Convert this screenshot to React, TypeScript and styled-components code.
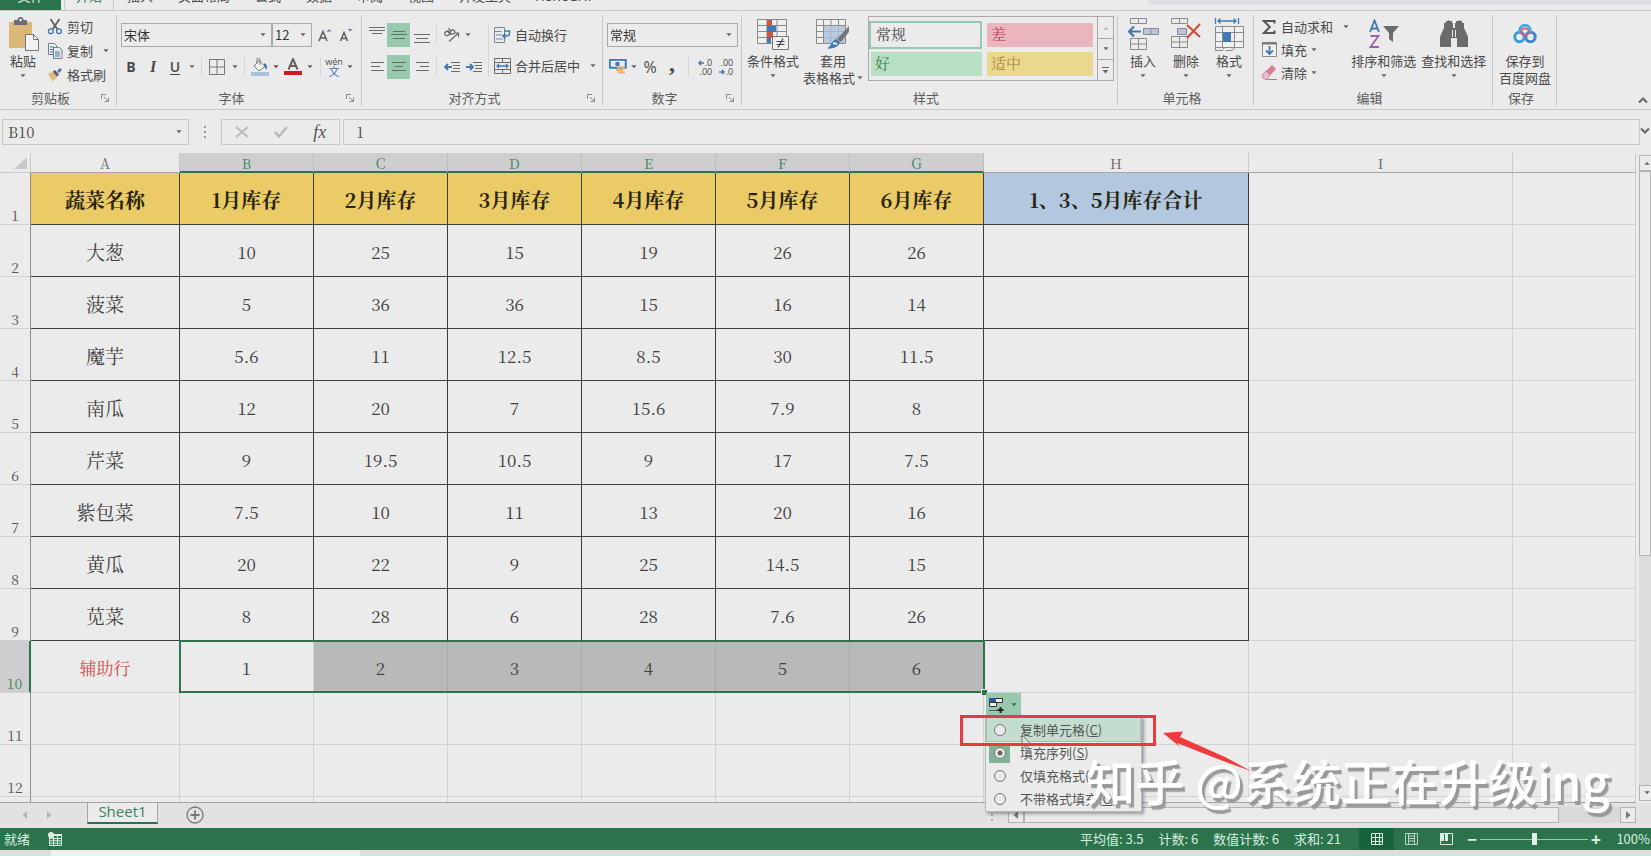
import React from 'react';
import styled, { createGlobalStyle, css } from 'styled-components';

const sans = '"Noto Sans CJK SC", "Open Sans", sans-serif';
const serif = '"Noto Serif CJK SC", "Noto Sans CJK SC", serif';
const c = {
  bg: '#ebebeb', line: '#c9c9c9', box: '#a9a9a9', text: '#4a4a4a', green: '#2b744b',
  mint: '#97c9ae', head: '#cecece', grid: '#d2d2d2', blue: '#3f78b5', ink: '#707070',
};

const Global = createGlobalStyle`
  *, *::before, *::after { box-sizing: border-box; }
  body { margin: 0; background: ${c.bg}; }
  button, input, select { font: inherit; color: inherit; margin: 0; padding: 0; border: 0; border-radius: 0; background: none; }
  svg { display: block; flex: none; }
`;

const App$ = styled.div`
  position: relative;
  display: flex;
  flex-direction: column;
  min-height: 100vh;
  overflow: hidden;
  background: ${c.bg};
  color: ${c.text};
  font: 13px/18px ${sans};
`;

/* ---------- tabs ---------- */
const TabBar = styled.nav`
  display: flex;
  align-items: flex-end;
  height: 11px;
  overflow: hidden;
  border-bottom: 1px solid ${c.line};
`;
const Tab = styled.button<{ $kind?: 'file' | 'active' }>`
  flex: none;
  height: 30px;
  padding: 7px 12px 5px 13px;
  line-height: 18px;
  ${p => p.$kind === 'file' && css`width: 61px; padding: 7px 0 5px; margin-right: 3px; background: ${c.green}; color: #e8f2ec;`}
  ${p => p.$kind === 'active' && css`width: 50px; padding: 7px 0 5px; color: ${c.green}; border: solid ${c.line}; border-width: 0 1px;`}
`;
const TitleHaze = styled.div`
  align-self: flex-start;
  flex: 1;
  max-width: 503px;
  height: 5px;
  margin-left: auto;
  background: #dfe0e6;
`;

/* ---------- ribbon ---------- */
const Ribbon = styled.div`
  display: flex;
  height: 99px;
  padding: 4px 0 3px;
  border-bottom: 1px solid ${c.line};
`;
const GroupBox = styled.section<{ $w: number }>`
  flex: none;
  display: flex;
  flex-direction: column;
  width: ${p => p.$w}px;
  border-right: 1px solid ${c.line};
`;
const GroupBody = styled.div`
  display: flex;
  align-items: flex-start;
  flex: 1 1 0;
  min-height: 0;
  padding: 0 4px;
`;
const GroupFoot = styled.div`
  flex: none;
  display: flex;
  align-items: center;
  height: 16px;
  padding-right: 7px;
  line-height: 16px;
  color: #5d5d5d;
`;
const GroupName = styled.span`
  flex: 1;
  text-align: center;
`;
const Launcher = styled.button`
  height: 8px;
`;
const Stack = styled.div<{ $gap?: number; $pad?: string }>`
  display: flex;
  flex-direction: column;
  gap: ${p => p.$gap ?? 0}px;
  padding: ${p => p.$pad ?? '0'};
`;
const Row = styled.div<{ $gap?: number; $pad?: string }>`
  display: flex;
  align-items: center;
  gap: ${p => p.$gap ?? 0}px;
  height: 24px;
  padding: ${p => p.$pad ?? '0'};
`;
const BigBtn = styled.button<{ $w: number }>`
  flex: none;
  display: flex;
  flex-direction: column;
  align-items: center;
  width: ${p => p.$w}px;
  padding-top: 2px;
  line-height: 17px;
  white-space: nowrap;
`;
const BigIcon = styled.span`
  display: flex;
  align-items: center;
  height: 34px;
  margin-bottom: 1px;
`;
const BigCaret = styled.span`
  display: flex;
  align-items: center;
  height: 14px;
`;
const WithCaret = styled.span`
  display: flex;
  align-items: center;
  gap: 2px;
`;
const SmallBtn = styled.button`
  display: flex;
  align-items: center;
  gap: 4px;
  height: 23px;
  white-space: nowrap;
`;
const IconSlot = styled.span`
  display: flex;
  justify-content: center;
  width: 16px;
`;
const IconBtn = styled.button<{ $w: number; $on?: boolean }>`
  flex: none;
  display: flex;
  align-items: center;
  justify-content: center;
  width: ${p => p.$w}px;
  height: 24px;
  background: ${p => (p.$on ? c.mint : 'none')};
`;
const Letter = styled.span<{ $v: 'b' | 'i' | 'u' | 'pct' | 'comma' }>`
  font: 15px/20px "Open Sans", sans-serif;
  ${p => p.$v === 'b' && css`font-weight: 700; font-size: 14px;`}
  ${p => p.$v === 'i' && css`font: italic 700 16px/20px "Liberation Serif", serif;`}
  ${p => p.$v === 'u' && css`font-weight: 600; font-size: 14px; line-height: 15px; border-bottom: 1px solid ${c.text};`}
  ${p => p.$v === 'pct' && css`font-size: 16px;`}
  ${p => p.$v === 'comma' && css`font: 700 24px/16px "Liberation Serif", serif; height: 24px;`}
`;
const Rule = styled.span<{ $tall?: boolean }>`
  flex: none;
  width: 1px;
  height: ${p => (p.$tall ? 52 : 20)}px;
  background: #d6d6d6;
`;
const SelectWrap = styled.label<{ $w: number }>`
  display: flex;
  align-items: center;
  width: ${p => p.$w}px;
  height: 24px;
  padding-right: 5px;
  border: 1px solid ${c.box};
  color: #333;
`;
const Select = styled.select`
  flex: 1;
  min-width: 0;
  padding-left: 2px;
  appearance: none;
  outline: none;
`;

const Gallery = styled.div`
  display: grid;
  grid-template-columns: 228px 16px;
  height: 65px;
  margin: 1px 0 0 2px;
  border: 1px solid ${c.box};
`;
const Swatches = styled.div`
  display: grid;
  grid-template-columns: 113px 108px;
  grid-template-rows: 28px 24px;
  gap: 3px;
  padding-top: 4px;
  align-items: center;
`;
const Swatch = styled.button<{ $bg: string; $fg: string; $on?: boolean }>`
  height: ${p => (p.$on ? 28 : 24)}px;
  margin: ${p => (p.$on ? '0' : '0 0 0 2px')};
  padding: 0 0 3px ${p => (p.$on ? 5 : 4)}px;
  text-align: left;
  font: 15px/20px ${serif};
  background: ${p => p.$bg};
  color: ${p => p.$fg};
  border: ${p => (p.$on ? `2px solid ${c.mint}` : '0')};
`;
const GalleryScroll = styled.div`
  display: grid;
  grid-template-rows: 1fr 1fr 1fr;
  border-left: 1px solid ${c.box};
`;
const GalleryBtn = styled.button`
  display: flex;
  align-items: center;
  justify-content: center;
  & + & { border-top: 1px solid ${c.box}; }
`;
const Collapse = styled.button`
  margin: auto 3px 2px auto;
`;

/* ---------- formula bar ---------- */
const FormulaBar = styled.div`
  display: flex;
  height: 43px;
  padding: 9px 0 8px 2px;
  font: 15px/22px ${serif};
`;
const Field = styled.div<{ $w?: number }>`
  display: flex;
  align-items: center;
  ${p => (p.$w ? `width: ${p.$w}px;` : 'flex: 1;')}
  border: 1px solid ${c.line};
  padding: 0 6px 0 5px;
`;
const FieldInput = styled.input<{ $indent?: boolean }>`
  flex: 1;
  min-width: 0;
  padding-left: ${p => (p.$indent ? 7 : 0)}px;
  outline: none;
`;
const Dots = styled.span`
  display: flex;
  align-items: center;
  justify-content: center;
  width: 32px;
`;
const FxBox = styled.div`
  display: flex;
  align-items: center;
  justify-content: space-around;
  width: 119px;
  margin-right: 3px;
  border: 1px solid ${c.line};
`;
const Fx = styled.span`
  font: italic 18px/20px "Liberation Serif", serif;
  color: #555;
`;

/* ---------- sheet ---------- */
const Workspace = styled.main`
  position: relative;
  flex: 1 1 0;
  min-height: 0;
  display: flex;
`;
const Pane = styled.div`
  flex: 1;
  min-width: 0;
  overflow: hidden;
  border-bottom: 1px solid #a6a6a6;
`;
const Table = styled.table`
  width: 100%;
  table-layout: fixed;
  border-collapse: separate;
  border-spacing: 0;
  font-family: ${serif};
`;
const Col = styled.col<{ $w?: number }>`
  width: ${p => (p.$w ? `${p.$w}px` : 'auto')};
`;
const Corner = styled.th`
  height: 20px;
  padding: 0 3px 2px 0;
  border: solid ${c.line};
  border-width: 0 1px 1px 0;
  & > svg { margin: 3px 0 0 auto; }
`;
const ColHead = styled.th<{ $sel: boolean }>`
  height: 20px;
  padding: 2px 0 0;
  font-weight: 400;
  font-size: 14px;
  line-height: 16px;
  vertical-align: top;
  color: ${p => (p.$sel ? '#3c8463' : '#666')};
  background: ${p => (p.$sel ? c.head : c.bg)};
  border-right: 1px solid ${p => (p.$sel ? '#bdbdbd' : c.line)};
  border-bottom: ${p => (p.$sel ? `2px solid ${c.green}` : '1px solid #a6a6a6')};
`;
const RowHead = styled.th<{ $sel: boolean }>`
  height: 52px;
  padding: 0;
  vertical-align: bottom;
  font-weight: 400;
  font-size: 14px;
  line-height: 18px;
  color: ${p => (p.$sel ? '#3c8463' : '#555')};
  background: ${p => (p.$sel ? c.head : c.bg)};
  border-bottom: 1px solid ${c.grid};
  border-right: ${p => (p.$sel ? `2px solid ${c.green}` : '1px solid #8f8f8f')};
`;
type CellKind = 'gold' | 'sky' | 'name' | 'num' | 'helper' | 'picked' | 'blank';
const Cell = styled.td<{ $kind: CellKind; $framed: boolean }>`
  height: 52px;
  padding: 2px 0 0;
  text-align: center;
  font-size: 17px;
  line-height: 24px;
  color: #404040;
  border: solid ${p => (p.$framed ? '#3d3d3d' : c.grid)};
  border-width: 0 1px 1px 0;
  ${p => (p.$kind === 'gold' || p.$kind === 'sky') && css`
    font-size: 20px; font-weight: 700; color: #2a2412;
    background: ${p.$kind === 'gold' ? '#ebcb65' : '#b1c8de'};`}
  ${p => p.$kind === 'name' && css`font-size: 19px;`}
  ${p => p.$kind === 'helper' && css`color: #d9484a;`}
  ${p => p.$kind === 'picked' && css`background: #b9b9b9; border-color: #a9a9a9;`}
`;
const VScroll = styled.div`
  display: flex;
  flex-direction: column;
  width: 12px;
  margin: 2px 0 2px 3px;
  background: #dcdcdc;
`;
const Thumb = styled.div<{ $grow: number }>`
  flex: ${p => p.$grow} 1 0;
  border: 1px solid #b4b4b4;
  background: ${c.bg};
`;
const Track = styled.div<{ $grow: number }>`
  flex: ${p => p.$grow} 1 0;
`;
const ScrollBtn = styled.button`
  flex: none;
  display: flex;
  align-items: center;
  justify-content: center;
  width: 16px;
  height: 16px;
  border: 1px solid #b4b4b4;
  background: ${c.bg};
`;

/* ---------- overlays on the sheet ---------- */
const Selection = styled.div`
  position: absolute;
  left: 179px;
  top: 487px;
  width: 806px;
  height: 53px;
  border: 2px solid ${c.green};
  pointer-events: none;
  &::after {
    content: '';
    position: absolute;
    right: -4px;
    bottom: -4px;
    width: 6px;
    height: 6px;
    background: ${c.green};
    border: solid ${c.bg};
    border-width: 1px 0 0 1px;
  }
`;
/* Layer above the sheet and its tab bar; starts where the column letters start. */
const SheetOverlay = styled.div`
  position: absolute;
  left: 0;
  top: 153px;
`;
const FillOptions = styled.div`
  position: absolute;
  left: 985px;
  top: 540px;
`;
const FillBtn = styled.button`
  display: flex;
  align-items: center;
  justify-content: space-between;
  width: 35px;
  height: 23px;
  margin-left: 1px;
  padding: 0 4px 0 2px;
  background: ${c.mint};
`;
const Menu = styled.fieldset`
  width: 157px;
  margin: 0;
  padding: 1px;
  border: 1px solid #b9b9b9;
  background: ${c.bg};
  box-shadow: 2px 2px 3px rgba(70, 70, 90, 0.5);
`;
const Option = styled.label<{ $hot: boolean }>`
  display: flex;
  align-items: center;
  gap: 10px;
  height: 23px;
  padding-left: 2px;
  color: #555;
  white-space: nowrap;
  background: ${p => (p.$hot ? '#c3decf' : 'none')};
  outline: ${p => (p.$hot ? '1px solid #9cc4ae' : 'none')};
`;
const RadioSlot = styled.span<{ $on: boolean }>`
  display: flex;
  align-items: center;
  justify-content: center;
  width: 21px;
  height: 20px;
  background: ${p => (p.$on ? '#7fb596' : 'none')};
`;
const Radio = styled.input`
  appearance: none;
  width: 12px;
  height: 12px;
  border: 1px solid #777;
  border-radius: 50%;
  background: ${c.bg};
  &:checked { background: radial-gradient(circle, #666 0 2px, ${c.bg} 3px); }
`;
const RedFrame = styled.div`
  position: absolute;
  left: 960px;
  top: 562px;
  width: 196px;
  height: 31px;
  border: 3px solid #e63b3c;
  pointer-events: none;
`;
const Pointer = styled.svg`
  position: absolute;
  left: 1021px;
  top: 581px;
`;
const Arrow = styled.svg`
  position: absolute;
  left: 1163px;
  top: 577px;
`;
const Watermark = styled.div`
  position: absolute;
  right: 41px;
  bottom: 46px;
  font: 500 49px/60px ${sans};
  color: #fff;
  text-shadow: 3px 4px 1px #999;
  white-space: nowrap;
  pointer-events: none;
`;

/* ---------- sheet tabs and status ---------- */
const SheetBar = styled.div`
  display: flex;
  align-items: flex-start;
  height: 25px;
  background: #e2e2e2;
`;
const SheetNav = styled.div`
  display: flex;
  justify-content: space-between;
  width: 87px;
  padding: 8px 35px 0 22px;
`;
const SheetTab = styled.button`
  width: 71px;
  height: 22px;
  margin-top: -1px;
  padding-bottom: 2px;
  font: 15px/18px "Open Sans", sans-serif;
  color: #3c8463;
  background: ${c.bg};
  border: solid #a6a6a6;
  border-width: 0 1px;
  border-bottom: 2px solid ${c.green};
`;
const AddSheet = styled.button`
  margin: 3px auto 0 28px;
`;
const HScroll = styled.div`
  display: flex;
  width: 40%;
  margin: 4px 15px 0 0;
`;
const HBar = styled.div`
  display: flex;
  flex: 1;
  background: #d9d9d9;
`;
const StatusBar = styled.footer`
  display: flex;
  align-items: center;
  height: 22px;
  padding: 0 1px 0 4px;
  background: ${c.green};
  color: #dcebe2;
  white-space: nowrap;
`;
const Stats = styled.div`
  display: flex;
  gap: 15px;
  margin: 0 18px 0 auto;
`;
const ViewBtn = styled.button<{ $on?: boolean }>`
  display: flex;
  align-items: center;
  justify-content: center;
  width: 35px;
  height: 22px;
  background: ${p => (p.$on ? '#17633a' : 'none')};
`;
const ZoomBtn = styled.button`
  width: 16px;
  height: 20px;
  font: 700 18px/18px "Open Sans", sans-serif;
`;
const Slider = styled.input`
  appearance: none;
  width: 108px;
  height: 14px;
  background: linear-gradient(#9cc4ae, #9cc4ae) center / 100% 1px no-repeat;
  &::-webkit-slider-thumb { appearance: none; width: 5px; height: 12px; background: #e4efe8; }
`;
const ZoomValue = styled.span`
  width: 46px;
  text-align: right;
`;
const StatusIcon = styled.span`
  margin-left: 18px;
`;
const Desk = styled.div`
  height: 6px;
  padding-left: 51px;
  background: #dedede;
  &::before { content: ''; display: block; width: 309px; height: 6px; background: #f0f0f0; }
`;

/* ---------- icons ---------- */
const Caret = ({ up = false, color = '#666' }: { up?: boolean; color?: string }) => (
  <svg width="6" height="4" viewBox="0 0 7 4"><path d={up ? 'M0.5 4L3.5 0.5L6.5 4z' : 'M0.5 0h6L3.5 3.5z'} fill={color} /></svg>
);
const Side = ({ left = false, color = '#777' }: { left?: boolean; color?: string }) => (
  <svg width="5" height="8" viewBox="0 0 5 8"><path d={left ? 'M5 0v8L0.5 4z' : 'M0 0v8L4.5 4z'} fill={color} /></svg>
);
const PasteIcon = () => (
  <svg width="34" height="34" viewBox="0 0 34 34">
    <rect x="3" y="5" width="23" height="26" rx="1" fill="#dcb878" />
    <path d="M8 3h3.500a3 3 0 0 1 6 0H21v5H8z" fill="#6b6b74" /><circle cx="14.500" cy="3" r="1.300" fill="#ebebeb" />
    <path d="M19.500 17.500h8l5 5v11h-13z" fill="#f2f2f2" stroke="#777" /><path d="M27.500 17.500v5h5" fill="none" stroke="#777" />
  </svg>
);
const CutIcon = () => (
  <svg width="16" height="17" viewBox="0 0 16 17" fill="none">
    <path d="M3.500 1l7 10.500M12.500 1l-7 10.500" stroke="#606060" strokeWidth="1.800" />
    <circle cx="3.800" cy="13.300" r="2.400" stroke={c.blue} strokeWidth="1.300" /><circle cx="12" cy="13.300" r="2.400" stroke={c.blue} strokeWidth="1.300" />
  </svg>
);
const CopyIcon = () => (
  <svg width="16" height="16" viewBox="0 0 16 16" fill="#ebebeb" stroke="#6f7c8c">
    <path d="M1.500.500h6l2 2v9h-8z" /><path d="M3 4h4M3 6.500h3M3 9h3" stroke={c.blue} />
    <path d="M6.500 4.500h6l2.500 2.500v8.500H6.500z" /><path d="M8 9h5M8 11h5M8 13h5" stroke={c.blue} />
  </svg>
);
const BrushIcon = () => (
  <svg width="16" height="14" viewBox="0 0 16 14">
    <path d="M1 6l4.500-2 4.500 5-4 4.500z" fill="#e0b878" /><path d="M5.500 3.500L8 2l4 4.500-2 2.200z" fill="#5d5d66" /><path d="M10 3l3-3 2 2-3 3z" fill="#56759f" />
  </svg>
);
const BorderIcon = () => (
  <svg width="16" height="16" viewBox="0 0 16 16" fill="none" stroke="#777"><path d="M.500.500h15v15H.500zM8 .500v15M.500 8h15" /></svg>
);
const BucketIcon = () => (
  <svg width="18" height="18" viewBox="0 0 18 18">
    <path d="M8 2.500l6 6-6 4.500-5-5z" fill="#f2f2f2" stroke="#777" /><path d="M6 6V1.500a1.500 1.500 0 0 1 3 0V7" fill="none" stroke="#777" />
    <path d="M13 5c3 1 3.500 3.500 2.500 7-1-1-1.500-3-2.500-4z" fill={c.blue} /><rect y="14" width="18" height="4" fill="#a7c2de" />
  </svg>
);
const FontColorIcon = () => (
  <svg width="18" height="18" viewBox="0 0 18 18"><path d="M4.500 11.500L9 1l4.500 10.500M6 8h6" fill="none" stroke="#606060" strokeWidth="2" /><rect y="13" width="18" height="4" fill="#d3191f" /></svg>
);
const Phonetic = styled.span`
  display: flex;
  flex-direction: column;
  align-items: center;
  font: 9px/8px "Open Sans", sans-serif;
  & > span { font: 11px/11px ${sans}; color: ${c.blue}; }
`;
const Grow = ({ down = false }: { down?: boolean }) => (
  <svg width="16" height="16" viewBox="0 0 16 16"><path d={down ? 'M2.500 14L6 5.500L9.500 14M3.500 11.500h5' : 'M2 14L6 4.500L10 14M3.500 11h5'} fill="none" stroke="#606060" strokeWidth="1.600" /><path d={down ? 'M9.500 2h5L12 4.500z' : 'M9.500 4.500L12 2l2.500 2.500z'} fill="#5d7fae" /></svg>
);
const Lines = ({ rows }: { rows: number[][] }) => (
  <svg width="18" height="18" viewBox="0 0 18 18" stroke="#6a6a6a">{rows.map(([x1, x2, y]) => <path key={y} d={`M${x1} ${y}.5H${x2}`} />)}</svg>
);
const AngleIcon = () => (
  <svg width="18" height="16" viewBox="0 0 18 16" fill="none" stroke="#666" strokeWidth="1.200">
    <circle cx="4" cy="6.500" r="2.200" /><path d="M4.500 3l3.500 5" /><circle cx="9.500" cy="5" r="2.200" /><path d="M5.500 1l2.500 4M6 14.500l9-8M15.500 10V6H11.500" />
  </svg>
);
const IndentIcon = ({ out = false }: { out?: boolean }) => (
  <svg width="16" height="12" viewBox="0 0 16 12" fill="none"><path d="M7 1.500h9M9 4.500h7M9 7.500h7M7 10.500h9" stroke="#6a6a6a" /><path d={out ? 'M8 6H1M4 3L1 6l3 3' : 'M0 6h7M4 3l3 3-3 3'} stroke={c.blue} strokeWidth="1.800" /></svg>
);
const WrapIcon = () => (
  <svg width="17" height="16" viewBox="0 0 17 16" fill="none"><path d="M.500.500h10v15H.500zM.500 4.500h7M2 8h6M2 12h7" stroke="#7a8796" /><path d="M10 4h5.500v2.500q0 2.500-3 2.500H9M11.500 6.500L9 9l2.500 2.500" stroke={c.blue} strokeWidth="1.500" /></svg>
);
const MergeIcon = () => (
  <svg width="17" height="16" viewBox="0 0 17 16" fill="none"><path d="M.500.500h16v15H.500zM.500 4.500h16M.500 11.500h16M8.500.500v4M8.500 11.500v4" stroke="#6a6a6a" /><path d="M3 8h11M5 6L3 8l2 2M12 6l2 2-2 2" stroke={c.blue} strokeWidth="1.300" /></svg>
);
const MoneyIcon = () => (
  <svg width="18" height="16" viewBox="0 0 18 16"><rect x=".750" y=".750" width="16" height="8" fill="#ebebeb" stroke={c.blue} strokeWidth="2" /><circle cx="8.500" cy="5" r="2.300" fill={c.blue} /><path d="M8 8.500h8M7 11h7M9 13.500h7" stroke="#ecb077" strokeWidth="2" /></svg>
);
const Decimals = styled.span`
  display: grid;
  font: 9px/9px "Open Sans", sans-serif;
  text-align: right;
  & > span { display: flex; align-items: center; justify-content: flex-end; gap: 1px; }
`;
const TinyArrow = ({ left = false }: { left?: boolean }) => (
  <svg width="6" height="6" viewBox="0 0 7 6" fill="none" stroke={c.blue} strokeWidth="1.600"><path d={left ? 'M7 3H1M3.500.500L1 3l2.500 2.500' : 'M0 3h6M3.500.500L6 3 3.500 5.500'} /></svg>
);
const CondIcon = () => (
  <svg width="32" height="32" viewBox="0 0 32 32">
    <path d="M.500 1.500h29v24H.500zM.500 7.500h29M.500 13.500h29M.500 19.500h29M10 1.500v24M20 1.500v24" fill="#f0f0f0" stroke="#8b8b8b" />
    <rect x="10" y="2" width="5" height="6" fill="#c9573f" /><rect x="10" y="8" width="9" height="6" fill={c.blue} /><rect x="10" y="14" width="6" height="6" fill="#c9573f" /><rect x="10" y="20" width="4" height="5" fill={c.blue} />
    <path d="M15.500 18.500h16v13h-16z" fill="#f0f0f0" stroke="#777" /><path d="M19.500 23.500h8M19.500 26.500h8M26 20.500l-5 9" stroke="#444" strokeWidth="1.200" />
  </svg>
);
const TableFmtIcon = () => (
  <svg width="34" height="32" viewBox="0 0 34 32">
    <path d="M.500 1.500h29v24H.500zM.500 7.500h29M.500 13.500h29M.500 19.500h29M7.500 1.500v24M15 1.500v24M22.500 1.500v24" fill="#f0f0f0" stroke="#8b8b8b" />
    <path d="M8 8h21v17H8z" fill="#a9c0dc" opacity=".8" /><path d="M33 8v6L25 24l-4-3z" fill="#757575" /><path d="M20 21l4 3c-2 6-8 7-13 6.500 4-2 4-7 9-9.500z" fill={c.blue} /><path d="M17 25l4 1" stroke="#ebebeb" strokeWidth="2" />
  </svg>
);
const InsertIcon = () => (
  <svg width="32" height="32" viewBox="0 0 32 32" fill="none" stroke="#8b8b8b">
    <path d="M3.500.500h16v5h-16zM11.500.500v5M3.500 20.500h16v11h-16zM3.500 26h16M11.500 20.500v11" /><path d="M16.500 10.500h15v6h-15zM24 10.500v6" fill="#b6c7da" /><path d="M14 13.500H2M7 8.500l-5 5 5 5" stroke={c.blue} strokeWidth="2.200" />
  </svg>
);
const DeleteIcon = () => (
  <svg width="32" height="32" viewBox="0 0 32 32" fill="none" stroke="#8b8b8b">
    <path d="M1.500.500h16v5h-16zM9.500.500v5M1.500 18.500h16v11h-16zM1.500 24h16M9.500 18.500v11" /><path d="M7.500 10.500h9v6h-9z" fill="#b6c7da" /><path d="M17 7l13 12M30 6L17 20" stroke="#cc4f3d" strokeWidth="2.200" />
  </svg>
);
const FormatIcon = () => (
  <svg width="31" height="33" viewBox="0 0 31 33" fill="none" stroke="#8b8b8b">
    <path d="M1.500 8.500h28v21h-28zM8.500 8.500v21M20.500 8.500v21M1.500 14.500h28M1.500 23.500h28" fill="#f0f0f0" /><rect x="9" y="14" width="8" height="10" fill={c.blue} stroke="none" /><path d="M1.500 29.500v3h7l2-3M11.500 32.500h7l2-3" />
    <path d="M1.500 0v6M24.500 0v6M4 3h18M6.500.500L4 3l2.500 2.500M19.500.500L22 3l-2.500 2.500" stroke={c.blue} strokeWidth="1.300" />
  </svg>
);
const SigmaIcon = () => (
  <svg width="14" height="14" viewBox="0 0 14 14" fill="none" stroke="#555" strokeWidth="2"><path d="M12.500 3.500V1H1.800l6 6-6 6h10.700v-2.500" /></svg>
);
const FillIcon = () => (
  <svg width="15" height="15" viewBox="0 0 15 15" fill="none"><path d="M.500.500h14v14H.500z" fill="#f0f0f0" stroke="#8b8b8b" /><path d="M0 1.500h15" stroke="#777" strokeWidth="2" /><path d="M7.500 4v8M4 8.500l3.500 3.500L11 8.500" stroke={c.blue} strokeWidth="1.800" /></svg>
);
const EraserIcon = () => (
  <svg width="16" height="15" viewBox="0 0 16 15"><path d="M5 6l6-6 4 4-6 6.500z" fill="#d77f92" /><path d="M1 10l4-4 4 4.500-3.500 3.500H3z" fill="#e3c3ca" stroke="#d77f92" /><path d="M5 14.500h11" stroke="#888" /></svg>
);
const SortIcon = () => (
  <svg width="30" height="30" viewBox="0 0 30 30" fill="none"><path d="M1 13L5.500 1.500L10 13M2.500 9.500h6" stroke={c.blue} strokeWidth="1.800" /><path d="M1.500 17h8L1.500 28H10" stroke="#9a62a8" strokeWidth="1.800" /><path d="M14 7h16l-6 7v9l-4-3v-6z" fill="#6b6b6b" /></svg>
);
const FindIcon = () => (
  <svg width="30" height="28" viewBox="0 0 30 28" fill="#6b6b6b"><path d="M5 3h2V1h6v2h1v5h2V3h1V1h6v2h2v5l2 4 2 5v10H18v-9h-6v9H1V17l2-5 2-4z" /><path d="M9.500 0v3M20.500 0v3" stroke="#6b6b6b" /><path d="M13.500 10v7M16.500 10v7" stroke="#ebebeb" /></svg>
);
const DiskIcon = () => (
  <svg width="24" height="20" viewBox="0 0 24 20" fill="none" strokeWidth="3"><circle cx="6.500" cy="13" r="4.700" stroke="#3b9bd6" /><circle cx="17.500" cy="13" r="4.700" stroke="#3f86cf" /><path d="M7 8a5.200 5.200 0 1 1 10 0" stroke="#41aee0" /><circle cx="12" cy="8" r="3.600" stroke="#e0586f" strokeWidth="1.800" /></svg>
);
const Chevron = ({ up = false }: { up?: boolean }) => (
  <svg width="10" height="8" viewBox="0 0 10 8" fill="none" stroke="#666" strokeWidth="2"><path d={up ? 'M1 6.500l4-4 4 4' : 'M1 1.500l4 4 4-4'} /></svg>
);
const LaunchIcon = () => (
  <svg width="8" height="8" viewBox="0 0 8 8" fill="none" stroke="#888"><path d="M.500 5V.500H5M3 3l4 4M7.500 3.500v4h-4" /></svg>
);

/* ---------- composed parts ---------- */
const Group = ({ name, w, launch = false, children }: { name: string; w: number; launch?: boolean; children: React.ReactNode }) => (
  <GroupBox $w={w} aria-label={name}>
    <GroupBody>{children}</GroupBody>
    <GroupFoot><GroupName>{name}</GroupName>{launch && <Launcher aria-label={`${name}设置`}><LaunchIcon /></Launcher>}</GroupFoot>
  </GroupBox>
);
const Big = ({ icon, text, w }: { icon: React.ReactNode; text: string; w: number }) => (
  <BigBtn $w={w}><BigIcon>{icon}</BigIcon>{text}<BigCaret><Caret /></BigCaret></BigBtn>
);
const Drop = ({ label, value, w }: { label: string; value: string; w: number }) => (
  <SelectWrap $w={w}><Select aria-label={label}><option>{value}</option></Select><Caret /></SelectWrap>
);

const letters = ['A', 'B', 'C', 'D', 'E', 'F', 'G', 'H', 'I', ''];
const widths = [149, 134, 134, 134, 134, 134, 134, 265, 264, undefined];
const rows: string[][] = [
  ['蔬菜名称', '1月库存', '2月库存', '3月库存', '4月库存', '5月库存', '6月库存', '1、3、5月库存合计'],
  ['大葱', '10', '25', '15', '19', '26', '26'],
  ['菠菜', '5', '36', '36', '15', '16', '14'],
  ['魔芋', '5.6', '11', '12.5', '8.5', '30', '11.5'],
  ['南瓜', '12', '20', '7', '15.6', '7.9', '8'],
  ['芹菜', '9', '19.5', '10.5', '9', '17', '7.5'],
  ['紫包菜', '7.5', '10', '11', '13', '20', '16'],
  ['黄瓜', '20', '22', '9', '25', '14.5', '15'],
  ['苋菜', '8', '28', '6', '28', '7.6', '26'],
  ['辅助行', '1', '2', '3', '4', '5', '6'],
  [], [], [],
];
const kindOf = (r: number, col: number): CellKind => {
  if (r === 0) return col < 7 ? 'gold' : col === 7 ? 'sky' : 'blank';
  if (r === 9) return col === 0 ? 'helper' : col > 1 && col < 7 ? 'picked' : 'num';
  return col === 0 ? 'name' : 'num';
};
const fills = [['复制单元格', 'C'], ['填充序列', 'S'], ['仅填充格式', 'F'], ['不带格式填充', 'O']];
const tabs = ['插入', '页面布局', '公式', '数据', '审阅', '视图', '开发工具', 'ACROBAT'];

export default function App() {
  return (
    <App$>
      <Global />
      <TabBar>
        <Tab $kind="file">文件</Tab>
        <Tab $kind="active">开始</Tab>
        {tabs.map(t => <Tab key={t}>{t}</Tab>)}
        <TitleHaze />
      </TabBar>

      <Ribbon>
        <Group name="剪贴板" w={117} launch>
          <BigBtn $w={38}><BigIcon><PasteIcon /></BigIcon>粘贴<BigCaret><Caret /></BigCaret></BigBtn>
          <Stack $gap={1} $pad="0 0 0 5px">
            <SmallBtn><IconSlot><CutIcon /></IconSlot>剪切</SmallBtn>
            <SmallBtn><IconSlot><CopyIcon /></IconSlot>复制&nbsp;&nbsp;<Caret /></SmallBtn>
            <SmallBtn><IconSlot><BrushIcon /></IconSlot>格式刷</SmallBtn>
          </Stack>
        </Group>

        <Group name="字体" w={245} launch>
          <Stack $gap={8} $pad="8px 0 0">
            <Row>
              <Drop label="字体" value="宋体" w={151} />
              <Drop label="字号" value="12" w={40} />
              <IconBtn $w={26} aria-label="增大字号"><Grow /></IconBtn>
              <IconBtn $w={16} aria-label="减小字号"><Grow down /></IconBtn>
            </Row>
            <Row>
              <IconBtn $w={20}><Letter $v="b">B</Letter></IconBtn>
              <IconBtn $w={24}><Letter $v="i">I</Letter></IconBtn>
              <IconBtn $w={20}><Letter $v="u">U</Letter></IconBtn>
              <IconBtn $w={14} aria-label="下划线选项"><Caret /></IconBtn>
              <Row $pad="0 0 0 2px"><Rule /></Row>
              <IconBtn $w={30} aria-label="边框"><BorderIcon /></IconBtn>
              <Caret />
              <Row $pad="0 5px 0 6px"><Rule /></Row>
              <IconBtn $w={20} aria-label="填充颜色"><BucketIcon /></IconBtn>
              <IconBtn $w={12} aria-label="填充颜色选项"><Caret color="#a33" /></IconBtn>
              <IconBtn $w={22} aria-label="字体颜色"><FontColorIcon /></IconBtn>
              <IconBtn $w={12} aria-label="字体颜色选项"><Caret /></IconBtn>
              <Row $pad="0 3px 0 4px"><Rule /></Row>
              <IconBtn $w={20}><Phonetic>wén<span>文</span></Phonetic></IconBtn>
              <IconBtn $w={12} aria-label="拼音选项"><Caret /></IconBtn>
            </Row>
          </Stack>
        </Group>

        <Group name="对齐方式" w={241} launch>
          <Stack $gap={8} $pad="8px 0 0">
            <Row>
              <IconBtn $w={21} aria-label="顶端对齐"><Lines rows={[[1, 17, 4], [4, 14, 7], [1, 17, 1]]} /></IconBtn>
              <IconBtn $w={23} $on aria-label="垂直居中"><Lines rows={[[3, 15, 5], [1, 17, 8], [3, 15, 12]]} /></IconBtn>
              <IconBtn $w={23} aria-label="底端对齐"><Lines rows={[[1, 17, 8], [3, 15, 12], [1, 17, 16]]} /></IconBtn>
              <Row $pad="0 5px 0 3px"><Rule /></Row>
              <IconBtn $w={20} aria-label="方向"><AngleIcon /></IconBtn>
              <IconBtn $w={12} aria-label="方向选项"><Caret /></IconBtn>
            </Row>
            <Row>
              <IconBtn $w={21} aria-label="左对齐"><Lines rows={[[3, 16, 4], [3, 12, 8], [3, 16, 12]]} /></IconBtn>
              <IconBtn $w={23} $on aria-label="居中"><Lines rows={[[2, 16, 4], [5, 13, 8], [2, 16, 12]]} /></IconBtn>
              <IconBtn $w={23} aria-label="右对齐"><Lines rows={[[3, 16, 4], [7, 16, 8], [3, 16, 12]]} /></IconBtn>
              <Row $pad="0 5px 0 3px"><Rule /></Row>
              <IconBtn $w={20} aria-label="减少缩进"><IndentIcon out /></IconBtn>
              <IconBtn $w={24} aria-label="增加缩进"><IndentIcon /></IconBtn>
            </Row>
          </Stack>
          <Stack $pad="10px 5px 0 2px"><Rule $tall /></Stack>
          <Stack $gap={8} $pad="8px 0 0">
            <SmallBtn><WrapIcon />自动换行</SmallBtn>
            <Row><SmallBtn><MergeIcon />合并后居中&nbsp;&nbsp;<Caret /></SmallBtn></Row>
          </Stack>
        </Group>

        <Group name="数字" w={139} launch>
          <Stack $gap={8} $pad="8px 0 0">
            <Drop label="数字格式" value="常规" w={131} />
            <Row>
              <IconBtn $w={22} aria-label="会计数字格式"><MoneyIcon /></IconBtn>
              <IconBtn $w={10} aria-label="会计格式选项"><Caret /></IconBtn>
              <IconBtn $w={22}><Letter $v="pct">%</Letter></IconBtn>
              <IconBtn $w={22}><Letter $v="comma">,</Letter></IconBtn>
              <Row $pad="0 6px 0 5px"><Rule /></Row>
              <IconBtn $w={20} aria-label="增加小数位数"><Decimals><span><TinyArrow left />.0</span><span>.00</span></Decimals></IconBtn>
              <IconBtn $w={22} aria-label="减少小数位数"><Decimals><span>.00</span><span><TinyArrow />.0</span></Decimals></IconBtn>
            </Row>
          </Stack>
        </Group>

        <Group name="样式" w={376}>
          <Big icon={<CondIcon />} text="条件格式" w={54} />
          <BigBtn $w={66}><BigIcon><TableFmtIcon /></BigIcon>套用<WithCaret>表格格式<Caret /></WithCaret></BigBtn>
          <Gallery>
            <Swatches>
              <Swatch $on $bg={c.bg} $fg="#444">常规</Swatch>
              <Swatch $bg="#ebb5be" $fg="#b04858">差</Swatch>
              <Swatch $bg="#b8dec3" $fg="#3a7d50">好</Swatch>
              <Swatch $bg="#ead88f" $fg="#a8893a">适中</Swatch>
            </Swatches>
            <GalleryScroll>
              <GalleryBtn aria-label="上一行"><Caret up color="#b0b6c4" /></GalleryBtn>
              <GalleryBtn aria-label="下一行"><Caret /></GalleryBtn>
              <GalleryBtn aria-label="其他"><svg width="7" height="7" viewBox="0 0 7 7"><path d="M0 .500h7" stroke="#666" /><path d="M.500 3h6L3.500 6.500z" fill="#666" /></svg></GalleryBtn>
            </GalleryScroll>
          </Gallery>
        </Group>

        <Group name="单元格" w={136}>
          <Big icon={<InsertIcon />} text="插入" w={42} />
          <Big icon={<DeleteIcon />} text="删除" w={44} />
          <Big icon={<FormatIcon />} text="格式" w={42} />
        </Group>

        <Group name="编辑" w={239}>
          <Stack $pad="0 0 0 3px">
            <SmallBtn><IconSlot><SigmaIcon /></IconSlot>自动求和&nbsp;&nbsp;<Caret /></SmallBtn>
            <SmallBtn><IconSlot><FillIcon /></IconSlot>填充<Caret /></SmallBtn>
            <SmallBtn><IconSlot><EraserIcon /></IconSlot>清除<Caret /></SmallBtn>
          </Stack>
          <Big icon={<SortIcon />} text="排序和筛选" w={70} />
          <Big icon={<FindIcon />} text="查找和选择" w={70} />
        </Group>

        <Group name="保存" w={64}>
          <BigBtn $w={56}><BigIcon><DiskIcon /></BigIcon>保存到<span>百度网盘</span></BigBtn>
        </Group>
        <Collapse aria-label="折叠功能区"><Chevron up /></Collapse>
      </Ribbon>

      <FormulaBar>
        <Field $w={187}><FieldInput aria-label="名称框" defaultValue="B10" /><Caret /></Field>
        <Dots><svg width="2" height="12" viewBox="0 0 2 12" fill="#999"><path d="M0 0h2v2H0zM0 5h2v2H0zM0 10h2v2H0z" /></svg></Dots>
        <FxBox>
          <button aria-label="取消"><svg width="14" height="12" viewBox="0 0 14 12"><path d="M1 1l12 10M13 1L1 11" stroke="#b9b9b9" strokeWidth="2" /></svg></button>
          <button aria-label="输入"><svg width="14" height="12" viewBox="0 0 14 12"><path d="M1 6l4 4.500L13 1" fill="none" stroke="#b9b9b9" strokeWidth="2.500" /></svg></button>
          <button><Fx>fx</Fx></button>
        </FxBox>
        <Field><FieldInput $indent aria-label="编辑栏" defaultValue="1" /></Field>
        <Stack $pad="8px 1px 0 0"><button aria-label="展开编辑栏"><Chevron /></button></Stack>
      </FormulaBar>

      <Workspace>
        <Pane>
          <Table>
            <colgroup><Col $w={31} />{widths.map((w, i) => <Col key={i} $w={w} />)}</colgroup>
            <thead>
              <tr>
                <Corner><svg width="13" height="12" viewBox="0 0 13 12"><path d="M13 0v12H0z" fill="#cacaca" /></svg></Corner>
                {letters.map((l, i) => <ColHead key={i} $sel={i > 0 && i < 7}>{l}</ColHead>)}
              </tr>
            </thead>
            <tbody>
              {rows.map((row, r) => (
                <tr key={r}>
                  <RowHead $sel={r === 9}>{r + 1}</RowHead>
                  {letters.map((_, i) => <Cell key={i} $kind={kindOf(r, i)} $framed={r < 9 && i < 8}>{row[i]}</Cell>)}
                </tr>
              ))}
            </tbody>
          </Table>
        </Pane>
        <VScroll>
          <ScrollBtn aria-label="向上滚动"><Caret up /></ScrollBtn>
          <Thumb $grow={384} /><Track $grow={230} />
          <ScrollBtn aria-label="向下滚动"><Caret /></ScrollBtn>
        </VScroll>
        <Selection />
      </Workspace>

      <SheetBar>
        <SheetNav><Side left color="#b5b5b5" /><Side color="#b5b5b5" /></SheetNav>
        <SheetTab>Sheet1</SheetTab>
        <AddSheet aria-label="新工作表"><svg width="18" height="18" viewBox="0 0 18 18" fill="none" stroke="#777"><circle cx="9" cy="9" r="8" strokeWidth="1.300" /><path d="M9 4.500v9M4.500 9h9" strokeWidth="1.800" /></svg></AddSheet>
        <HScroll>
          <Dots><svg width="2" height="12" viewBox="0 0 2 12" fill="#aaa"><path d="M0 0h2v2H0zM0 5h2v2H0zM0 10h2v2H0z" /></svg></Dots>
          <ScrollBtn aria-label="向左滚动"><Side left /></ScrollBtn>
          <HBar><Thumb $grow={536} /><Track $grow={61} /></HBar>
          <ScrollBtn aria-label="向右滚动"><Side /></ScrollBtn>
        </HScroll>
      </SheetBar>

      <StatusBar>
        就绪
        <StatusIcon><svg width="14" height="14" viewBox="0 0 14 14" fill="none" stroke="#dcebe2"><path d="M1.500 3.500h12v10h-12zM1.500 6.500h12M1.500 8.800h12M1.500 11.200h12M5.500 4v9M9.500 4v9" /><path d="M5 2h9v2H5z" fill="#dcebe2" stroke="none" /><circle cx="3" cy="3" r="3" fill="#dcebe2" stroke="none" /></svg></StatusIcon>
        <Stats><span>平均值: 3.5</span><span>计数: 6</span><span>数值计数: 6</span><span>求和: 21</span></Stats>
        <ViewBtn $on aria-label="普通"><svg width="12" height="12" viewBox="0 0 12 12" fill="none" stroke="#dcebe2"><path d="M.500.500h11v11H.500zM4.500.500v11M8.500.500v11M.500 4.500h11M.500 8.500h11" /></svg></ViewBtn>
        <ViewBtn aria-label="页面布局"><svg width="13" height="12" viewBox="0 0 13 12" fill="none" stroke="#b9d5c5"><path d="M.500.500h12v11H.500zM3.500.500v11M9.500.500v11M4 3h5M4 5.500h5M4 8h5" /></svg></ViewBtn>
        <ViewBtn aria-label="分页预览"><svg width="13" height="12" viewBox="0 0 13 12" fill="none" stroke="#dcebe2"><path d="M.500.500h12v11H.500z" /><path d="M0 0h4v8H0zM5 0h3v8H5z" fill="#dcebe2" stroke="none" /></svg></ViewBtn>
        <ZoomBtn aria-label="缩小">−</ZoomBtn>
        <Slider type="range" aria-label="显示比例" defaultValue={50} />
        <ZoomBtn aria-label="放大">+</ZoomBtn>
        <ZoomValue>100%</ZoomValue>
      </StatusBar>
      <Desk />

      <SheetOverlay>
        <FillOptions>
          <FillBtn aria-label="自动填充选项">
            <svg width="16" height="16" viewBox="0 0 16 16"><path d="M1.500 1.500h13v4h-13zM1.500 5.500h7v4h-7z" fill="#f0f0f0" stroke="#333" /><path d="M1 1h7v4H1z" fill="#2a57a5" /><path d="M1.500 13.500h8" stroke="#333" strokeDasharray="2 1" /><path d="M12.500 10v6M9.500 13h6" stroke="#222" strokeWidth="2" /></svg>
            <Caret color="#3b6a50" />
          </FillBtn>
          <Menu aria-label="自动填充选项">
            {fills.map(([t, k], i) => (
              <Option key={k} $hot={i === 0}>
                <RadioSlot $on={i === 1}><Radio type="radio" name="fill" defaultChecked={i === 1} /></RadioSlot>
                <span>{t}(<u>{k}</u>)</span>
              </Option>
            ))}
          </Menu>
        </FillOptions>
        <Pointer width="12" height="20" viewBox="0 0 12 20"><path d="M1 1v14l3.500-3 2.500 6 2-1-2.500-5.500H11z" fill="#dfe9e3" fillOpacity=".7" stroke="#777" /></Pointer>
        <RedFrame />
        <Arrow width="90" height="42" viewBox="0 0 90 42"><path d="M0 3L20 1.500L17 7L62 27L88 41L60 31L14 13L17 17z" fill="#f03a3b" /></Arrow>
      </SheetOverlay>
      <Watermark>知乎 @系统正在升级ing</Watermark>
    </App$>
  );
}
